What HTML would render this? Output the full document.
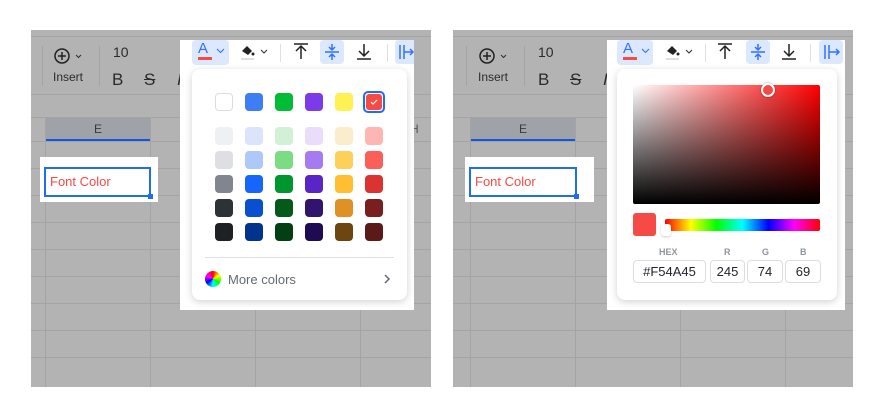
<!DOCTYPE html>
<html><head><meta charset="utf-8"><style>
*{margin:0;padding:0;box-sizing:border-box}
body{width:885px;height:417px;background:#fff;position:relative;overflow:hidden;font-family:"Liberation Sans",sans-serif}
.a{position:absolute}
.g{background:#b3b3b3}
.hl{background:#a4a4a4}
.vl{background:#a4a4a4;width:1px}
.sw{position:absolute;width:18px;height:18px;border-radius:4px}
.t{position:absolute;color:#2b2b2b;font-size:13px}
.card{position:absolute;background:#fff;border-radius:8px;box-shadow:0 2px 8px rgba(0,0,0,.18)}
.inp{position:absolute;height:23px;border:1px solid #dcdde0;border-radius:4px;font-size:13px;color:#1f2329;text-align:center;line-height:21px}
.lab{position:absolute;font-size:9px;color:#8f959e;font-weight:bold}
</style></head><body>

<!-- LEFT PANEL -->
<div class="a g" style="left:31px;top:30px;width:400px;height:357px"></div>
<div class="a hl" style="left:31px;top:36px;width:400px;height:1px"></div>
<div class="a hl" style="left:31px;top:94px;width:400px;height:1px"></div>
<div class="a hl" style="left:31px;top:117px;width:400px;height:1px"></div>
<div class="a" style="left:45px;top:118px;width:105px;height:22px;background:#9fa2a8"></div>
<div class="a" style="left:45px;top:139px;width:105px;height:2px;background:#1456d9"></div>
<div class="a" style="left:94px;top:122px;font-size:12px;color:#3a3a3a">E</div>
<div class="a" style="left:410px;top:122px;font-size:12px;color:#555">H</div>
<div class="a hl" style="left:31px;top:141px;width:400px;height:1px"></div>
<div class="a hl" style="left:31px;top:168px;width:400px;height:1px"></div>
<div class="a hl" style="left:31px;top:195px;width:400px;height:1px"></div>
<div class="a hl" style="left:31px;top:222px;width:400px;height:1px"></div>
<div class="a hl" style="left:31px;top:249px;width:400px;height:1px"></div>
<div class="a hl" style="left:31px;top:276px;width:400px;height:1px"></div>
<div class="a hl" style="left:31px;top:303px;width:400px;height:1px"></div>
<div class="a hl" style="left:31px;top:330px;width:400px;height:1px"></div>
<div class="a hl" style="left:31px;top:357px;width:400px;height:1px"></div>
<div class="a vl" style="left:45px;top:118px;height:269px"></div>
<div class="a vl" style="left:150px;top:118px;height:269px"></div>
<div class="a vl" style="left:255px;top:118px;height:269px"></div>
<div class="a vl" style="left:360px;top:118px;height:269px"></div>
<div class="a vl" style="left:42px;top:46px;height:40px"></div>
<div class="a vl" style="left:99px;top:46px;height:40px"></div>
<!-- toolbar -->
<svg class="a" style="left:52px;top:46px" width="34" height="20"><circle cx="10" cy="10" r="7" fill="none" stroke="#222" stroke-width="1.5"/><path d="M10 6v8M6 10h8" stroke="#222" stroke-width="1.5"/><path d="M24 9l2.5 2.5L29 9" fill="none" stroke="#333" stroke-width="1.1"/></svg>
<div class="t" style="left:53px;top:70px;font-size:12px">Insert</div>
<div class="t" style="left:113px;top:44px;font-size:14px">10</div>
<div class="t" style="left:112px;top:70px;font-size:17px">B</div>
<div class="t" style="left:144px;top:70px;font-size:17px;text-decoration:line-through">S</div>
<div class="t" style="left:177px;top:70px;font-size:17px;font-style:italic">I</div>
<!-- white highlight -->
<div class="a" style="left:180px;top:40px;width:234px;height:270px;background:#fff"></div>
<div class="a" style="left:192px;top:40px;width:37px;height:25px;background:#dce8fd;border-radius:4px"></div>
<div class="a" style="left:198px;top:40px;font-size:15px;color:#3370ff">A</div>
<div class="a" style="left:198px;top:57px;width:14px;height:3px;background:#f54a45"></div>
<svg class="a" style="left:216px;top:47px" width="10" height="8"><path d="M1 2l3.5 3.5L8 2" fill="none" stroke="#3370ff" stroke-width="1.1"/></svg>
<svg class="a" style="left:238px;top:42px" width="34" height="20"><path d="M4 9l5-5 5 5-4 4z" fill="#222"/><circle cx="15" cy="12" r="1.5" fill="#222"/><rect x="3" y="16" width="13" height="2" fill="#ddd"/><path d="M23 8l3 3 3-3" fill="none" stroke="#333" stroke-width="1.1"/></svg>
<div class="a" style="left:280px;top:44px;width:1px;height:18px;background:#e0e0e0"></div>
<svg class="a" style="left:291px;top:41px" width="20" height="20"><path d="M3 3h14M10 18V6M5 10l5-5 5 5" fill="none" stroke="#222" stroke-width="1.5"/></svg>
<div class="a" style="left:320px;top:40px;width:24px;height:24px;background:#dce8fd;border-radius:4px"></div>
<svg class="a" style="left:322px;top:42px" width="20" height="20"><path d="M3 10h14M10 2v5M7 5l3 3 3-3M10 18v-5M7 15l3-3 3 3" fill="none" stroke="#3370ff" stroke-width="1.5"/></svg>
<svg class="a" style="left:354px;top:41px" width="20" height="20"><path d="M3 18h14M10 3v12M5 10l5 5 5-5" fill="none" stroke="#222" stroke-width="1.5"/></svg>
<div class="a" style="left:387px;top:44px;width:1px;height:18px;background:#e0e0e0"></div>
<div class="a" style="left:395px;top:40px;width:19px;height:24px;background:#dce8fd;border-radius:4px 0 0 4px"></div>
<svg class="a" style="left:398px;top:42px" width="16" height="20"><path d="M2 3v14M6 3v14M6 10h9M12 7l3 3-3 3" fill="none" stroke="#3370ff" stroke-width="1.5"/></svg>
<!-- cell -->
<div class="a" style="left:40px;top:157px;width:118px;height:45px;background:#fff"></div>
<div class="a" style="left:44px;top:167px;width:107px;height:30px;border:2px solid #1f6df2"></div>
<div class="a" style="left:148px;top:194px;width:5px;height:5px;background:#1f6df2"></div>
<div class="a" style="left:50px;top:174px;font-size:13px;color:#f54a45">Font Color</div>
<!-- card -->
<div class="card" style="left:192px;top:69px;width:215px;height:231px"></div>
<div class="sw" style="left:215px;top:93px;background:#fff;border:1px solid #dcdde0"></div>
<div class="sw" style="left:245px;top:93px;background:#3d7ef5"></div>
<div class="sw" style="left:275px;top:93px;background:#00bd35"></div>
<div class="sw" style="left:305px;top:93px;background:#7b3be8"></div>
<div class="sw" style="left:335px;top:93px;background:#fff152"></div>
<div class="a" style="left:363px;top:91px;width:22px;height:22px;border:2px solid #1f6df2;border-radius:5px"></div>
<div class="sw" style="left:366px;top:94px;width:16px;height:16px;background:#f54a45;border-radius:3px"></div>
<svg class="a" style="left:368px;top:96px" width="12" height="12"><path d="M3 6l2 2 4-4" fill="none" stroke="#fff" stroke-width="1.2"/></svg>
<div class="sw" style="left:215px;top:127px;background:#eff0f1"></div>
<div class="sw" style="left:245px;top:127px;background:#dae5fd"></div>
<div class="sw" style="left:275px;top:127px;background:#d1f0d5"></div>
<div class="sw" style="left:305px;top:127px;background:#eadcfb"></div>
<div class="sw" style="left:335px;top:127px;background:#fbecce"></div>
<div class="sw" style="left:365px;top:127px;background:#feb6b3"></div>
<div class="sw" style="left:215px;top:151px;background:#dedfe2"></div>
<div class="sw" style="left:245px;top:151px;background:#aec8f8"></div>
<div class="sw" style="left:275px;top:151px;background:#7bdc84"></div>
<div class="sw" style="left:305px;top:151px;background:#a77bf0"></div>
<div class="sw" style="left:335px;top:151px;background:#fdd05a"></div>
<div class="sw" style="left:365px;top:151px;background:#fc5f5a"></div>
<div class="sw" style="left:215px;top:175px;background:#80858e"></div>
<div class="sw" style="left:245px;top:175px;background:#1566f9"></div>
<div class="sw" style="left:275px;top:175px;background:#00962e"></div>
<div class="sw" style="left:305px;top:175px;background:#5a24c6"></div>
<div class="sw" style="left:335px;top:175px;background:#ffbf30"></div>
<div class="sw" style="left:365px;top:175px;background:#db3232"></div>
<div class="sw" style="left:215px;top:199px;background:#2d3236"></div>
<div class="sw" style="left:245px;top:199px;background:#0850d0"></div>
<div class="sw" style="left:275px;top:199px;background:#035a1a"></div>
<div class="sw" style="left:305px;top:199px;background:#31146e"></div>
<div class="sw" style="left:335px;top:199px;background:#df9125"></div>
<div class="sw" style="left:365px;top:199px;background:#7a1f1f"></div>
<div class="sw" style="left:215px;top:223px;background:#1e2024"></div>
<div class="sw" style="left:245px;top:223px;background:#00348c"></div>
<div class="sw" style="left:275px;top:223px;background:#023f13"></div>
<div class="sw" style="left:305px;top:223px;background:#1f0b52"></div>
<div class="sw" style="left:335px;top:223px;background:#6c4511"></div>
<div class="sw" style="left:365px;top:223px;background:#5c1919"></div>
<div class="a" style="left:205px;top:257px;width:189px;height:1px;background:#dedfe2"></div>
<div class="a" style="left:205px;top:271px;width:16px;height:16px;border-radius:50%;background:conic-gradient(red,#ff0,#0f0,#0ff,#00f,#f0f,red)"></div>
<div class="a" style="left:228px;top:272px;font-size:13px;color:#646a73">More colors</div>
<svg class="a" style="left:382px;top:273px" width="10" height="12"><path d="M3 2l4 4-4 4" fill="none" stroke="#646a73" stroke-width="1.5"/></svg>

<!-- RIGHT PANEL -->
<div class="a g" style="left:453px;top:30px;width:400px;height:357px"></div>
<div class="a hl" style="left:453px;top:36px;width:400px;height:1px"></div>
<div class="a hl" style="left:453px;top:94px;width:400px;height:1px"></div>
<div class="a hl" style="left:453px;top:117px;width:400px;height:1px"></div>
<div class="a" style="left:470px;top:118px;width:105px;height:22px;background:#9fa2a8"></div>
<div class="a" style="left:470px;top:139px;width:105px;height:2px;background:#1456d9"></div>
<div class="a" style="left:519px;top:122px;font-size:12px;color:#3a3a3a">E</div>
<div class="a hl" style="left:453px;top:141px;width:400px;height:1px"></div>
<div class="a hl" style="left:453px;top:168px;width:400px;height:1px"></div>
<div class="a hl" style="left:453px;top:195px;width:400px;height:1px"></div>
<div class="a hl" style="left:453px;top:222px;width:400px;height:1px"></div>
<div class="a hl" style="left:453px;top:249px;width:400px;height:1px"></div>
<div class="a hl" style="left:453px;top:276px;width:400px;height:1px"></div>
<div class="a hl" style="left:453px;top:303px;width:400px;height:1px"></div>
<div class="a hl" style="left:453px;top:330px;width:400px;height:1px"></div>
<div class="a hl" style="left:453px;top:357px;width:400px;height:1px"></div>
<div class="a vl" style="left:470px;top:118px;height:269px"></div>
<div class="a vl" style="left:575px;top:118px;height:269px"></div>
<div class="a vl" style="left:680px;top:118px;height:269px"></div>
<div class="a vl" style="left:785px;top:118px;height:269px"></div>
<div class="a vl" style="left:466px;top:46px;height:40px"></div>
<div class="a vl" style="left:524px;top:46px;height:40px"></div>
<svg class="a" style="left:477px;top:46px" width="34" height="20"><circle cx="10" cy="10" r="7" fill="none" stroke="#222" stroke-width="1.5"/><path d="M10 6v8M6 10h8" stroke="#222" stroke-width="1.5"/><path d="M24 9l2.5 2.5L29 9" fill="none" stroke="#333" stroke-width="1.1"/></svg>
<div class="t" style="left:478px;top:70px;font-size:12px">Insert</div>
<div class="t" style="left:538px;top:44px;font-size:14px">10</div>
<div class="t" style="left:538px;top:70px;font-size:17px">B</div>
<div class="t" style="left:570px;top:70px;font-size:17px;text-decoration:line-through">S</div>
<div class="t" style="left:603px;top:70px;font-size:17px;font-style:italic">I</div>
<div class="a" style="left:607px;top:40px;width:238px;height:270px;background:#fff"></div>
<div class="a" style="left:617px;top:40px;width:36px;height:25px;background:#dce8fd;border-radius:4px"></div>
<div class="a" style="left:623px;top:40px;font-size:15px;color:#3370ff">A</div>
<div class="a" style="left:623px;top:57px;width:14px;height:3px;background:#f54a45"></div>
<svg class="a" style="left:641px;top:47px" width="10" height="8"><path d="M1 2l3.5 3.5L8 2" fill="none" stroke="#3370ff" stroke-width="1.1"/></svg>
<svg class="a" style="left:663px;top:42px" width="34" height="20"><path d="M4 9l5-5 5 5-4 4z" fill="#222"/><circle cx="15" cy="12" r="1.5" fill="#222"/><rect x="3" y="16" width="13" height="2" fill="#ddd"/><path d="M23 8l3 3 3-3" fill="none" stroke="#333" stroke-width="1.1"/></svg>
<div class="a" style="left:705px;top:44px;width:1px;height:18px;background:#e0e0e0"></div>
<svg class="a" style="left:715px;top:41px" width="20" height="20"><path d="M3 3h14M10 18V6M5 10l5-5 5 5" fill="none" stroke="#222" stroke-width="1.5"/></svg>
<div class="a" style="left:746px;top:40px;width:24px;height:24px;background:#dce8fd;border-radius:4px"></div>
<svg class="a" style="left:748px;top:42px" width="20" height="20"><path d="M3 10h14M10 2v5M7 5l3 3 3-3M10 18v-5M7 15l3-3 3 3" fill="none" stroke="#3370ff" stroke-width="1.5"/></svg>
<svg class="a" style="left:779px;top:41px" width="20" height="20"><path d="M3 18h14M10 3v12M5 10l5 5 5-5" fill="none" stroke="#222" stroke-width="1.5"/></svg>
<div class="a" style="left:810px;top:44px;width:1px;height:18px;background:#e0e0e0"></div>
<div class="a" style="left:819px;top:40px;width:24px;height:24px;background:#dce8fd;border-radius:4px"></div>
<svg class="a" style="left:822px;top:42px" width="20" height="20"><path d="M3 3v14M7 3v14M7 10h10M14 7l3 3-3 3" fill="none" stroke="#3370ff" stroke-width="1.5"/></svg>
<div class="a" style="left:465px;top:157px;width:129px;height:45px;background:#fff"></div>
<div class="a" style="left:469px;top:167px;width:108px;height:30px;border:2px solid #1f6df2"></div>
<div class="a" style="left:574px;top:194px;width:5px;height:5px;background:#1f6df2"></div>
<div class="a" style="left:475px;top:174px;font-size:13px;color:#f54a45">Font Color</div>
<div class="card" style="left:617px;top:69px;width:220px;height:231px"></div>
<div class="a" style="left:633px;top:85px;width:187px;height:119px;border-radius:2px;background:linear-gradient(to bottom,rgba(0,0,0,0),#000),linear-gradient(to right,#fff,#f00)"></div>
<div class="a" style="left:761px;top:83px;width:14px;height:14px;border-radius:50%;border:2px solid #fff;background:#f54a45;box-shadow:0 0 2px rgba(0,0,0,.4)"></div>
<div class="a" style="left:633px;top:213px;width:23px;height:23px;border-radius:3px;background:#f54a45"></div>
<div class="a" style="left:665px;top:219px;width:155px;height:12px;border-radius:2px;background:linear-gradient(to right,#f00,#ff0,#0f0,#0ff,#00f,#f0f,#f00)"></div>
<div class="a" style="left:661px;top:224px;width:10px;height:12px;background:#fff;border-radius:3px;box-shadow:0 1px 2px rgba(0,0,0,.2)"></div>
<div class="lab" style="left:659px;top:247px">HEX</div>
<div class="lab" style="left:724px;top:247px">R</div>
<div class="lab" style="left:762px;top:247px">G</div>
<div class="lab" style="left:800px;top:247px">B</div>
<div class="inp" style="left:633px;top:260px;width:73px">#F54A45</div>
<div class="inp" style="left:710px;top:260px;width:35px">245</div>
<div class="inp" style="left:747px;top:260px;width:36px">74</div>
<div class="inp" style="left:785px;top:260px;width:36px">69</div>
</body></html>
